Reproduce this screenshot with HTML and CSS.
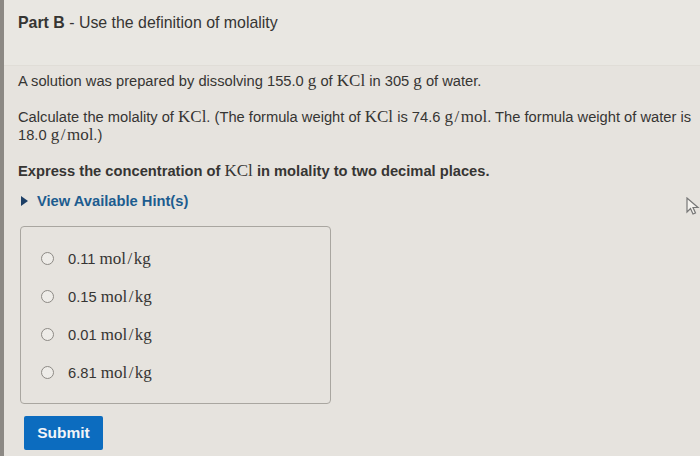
FILE: index.html
```html
<!DOCTYPE html>
<html>
<head>
<meta charset="utf-8">
<link rel="stylesheet" href="styles.css">
</head>
<body>
<div class="page">
  <header class="head">
    <h2 class="title"><b>Part B</b> - Use the definition of molality</h2>
  </header>
  <main class="content">
    <p class="para first">A solution was prepared by dissolving 155.0 <span class="m">g</span> of <span class="m">KCl</span> in 305 <span class="m">g</span> of water.</p>
    <p class="para">Calculate the molality of <span class="m">KCl</span>. (The formula weight of <span class="m">KCl</span> is 74.6 <span class="m">g<span class="sl">/</span>mol</span>. The formula weight of water is 18.0 <span class="m">g<span class="sl">/</span>mol</span>.)</p>
    <p class="para strong">Express the concentration of <span class="m">KCl</span> in molality to two decimal places.</p>
    <div class="hint"><span class="tri"></span>View Available Hint(s)</div>
    <div class="choices">
      <label class="opt"><span class="radio"></span><span>0.11 <span class="m">mol<span class="sl">/</span>kg</span></span></label>
      <label class="opt"><span class="radio"></span><span>0.15 <span class="m">mol<span class="sl">/</span>kg</span></span></label>
      <label class="opt"><span class="radio"></span><span>0.01 <span class="m">mol<span class="sl">/</span>kg</span></span></label>
      <label class="opt"><span class="radio"></span><span>6.81 <span class="m">mol<span class="sl">/</span>kg</span></span></label>
    </div>
    <button class="submit">Submit</button>
  </main>
  <svg class="cursor" width="16" height="20" viewBox="0 0 16 20"><path d="M1 1 L1 15 L4.5 11.5 L7 17 L9.5 16 L7 10.5 L12 10.5 Z" fill="#f4f2ee" stroke="#777" stroke-width="1.2"/></svg>
</div>
</body>
</html>
```
FILE: styles.css
```css
html, body { margin: 0; padding: 0; }
body {
  width: 700px; height: 456px; overflow: hidden;
  background: #e4e1dc;
  font-family: "Liberation Sans", Arial, sans-serif;
  color: #363533;
}
.page {
  position: relative;
  height: 456px;
  border-left: 4px solid #8c8984;
  background: #e6e3de;
  box-sizing: border-box;
}
.head {
  height: 66px;
  background: #e9e7e2;
  border-bottom: 1px solid #e0ddd7;
  padding: 13px 0 0 14px;
  box-sizing: border-box;
}
.title {
  margin: 0;
  font-size: 15.9px;
  line-height: 20px;
  font-weight: normal;
  color: #363533;
}
.title b { font-weight: bold; }
.content {
  padding: 6px 0 0 14px;
}
.para {
  margin: 0;
  font-size: 14.7px;
  line-height: 18px;
}
.first { margin-bottom: 18px; }
.strong { font-weight: bold; margin-top: 18px; }
.m {
  font-family: "Liberation Serif", "Times New Roman", serif;
  font-size: 17px;
  font-weight: normal;
  line-height: 1;
}
.sl { padding: 0 1.5px; }
.hint {
  display: flex;
  align-items: center;
  gap: 9px;
  font-size: 14.7px;
  font-weight: bold;
  color: #1d5c8f;
  padding-left: 3px;
  height: 20px;
  margin-top: 11px;
}
.tri {
  width: 0; height: 0;
  border-top: 5px solid transparent;
  border-bottom: 5px solid transparent;
  border-left: 7px solid #1d3f66;
}
.choices {
  margin: 15px 0 0 2px;
  width: 311px;
  height: 178px;
  box-sizing: border-box;
  border: 1.5px solid #a9a6a0;
  border-radius: 4px;
  padding: 21.5px 0 0 20px;
  display: flex;
  flex-direction: column;
  gap: 18px;
}
.opt {
  display: flex;
  align-items: center;
  gap: 14px;
  font-size: 14.7px;
  height: 20px;
}
.radio {
  width: 11px; height: 11px;
  border: 1.5px solid #8d8a85;
  border-radius: 50%;
  background: #eeece8;
}
.submit {
  display: block;
  margin: 12px 0 0 6px;
  width: 79px; height: 34px;
  background: #0c6cbf;
  color: #f2f5f8;
  border: none;
  border-radius: 2px;
  font-family: "Liberation Sans", Arial, sans-serif;
  font-weight: bold;
  font-size: 15.5px;
}
.cursor { position: absolute; left: 682px; top: 197px; }
```
